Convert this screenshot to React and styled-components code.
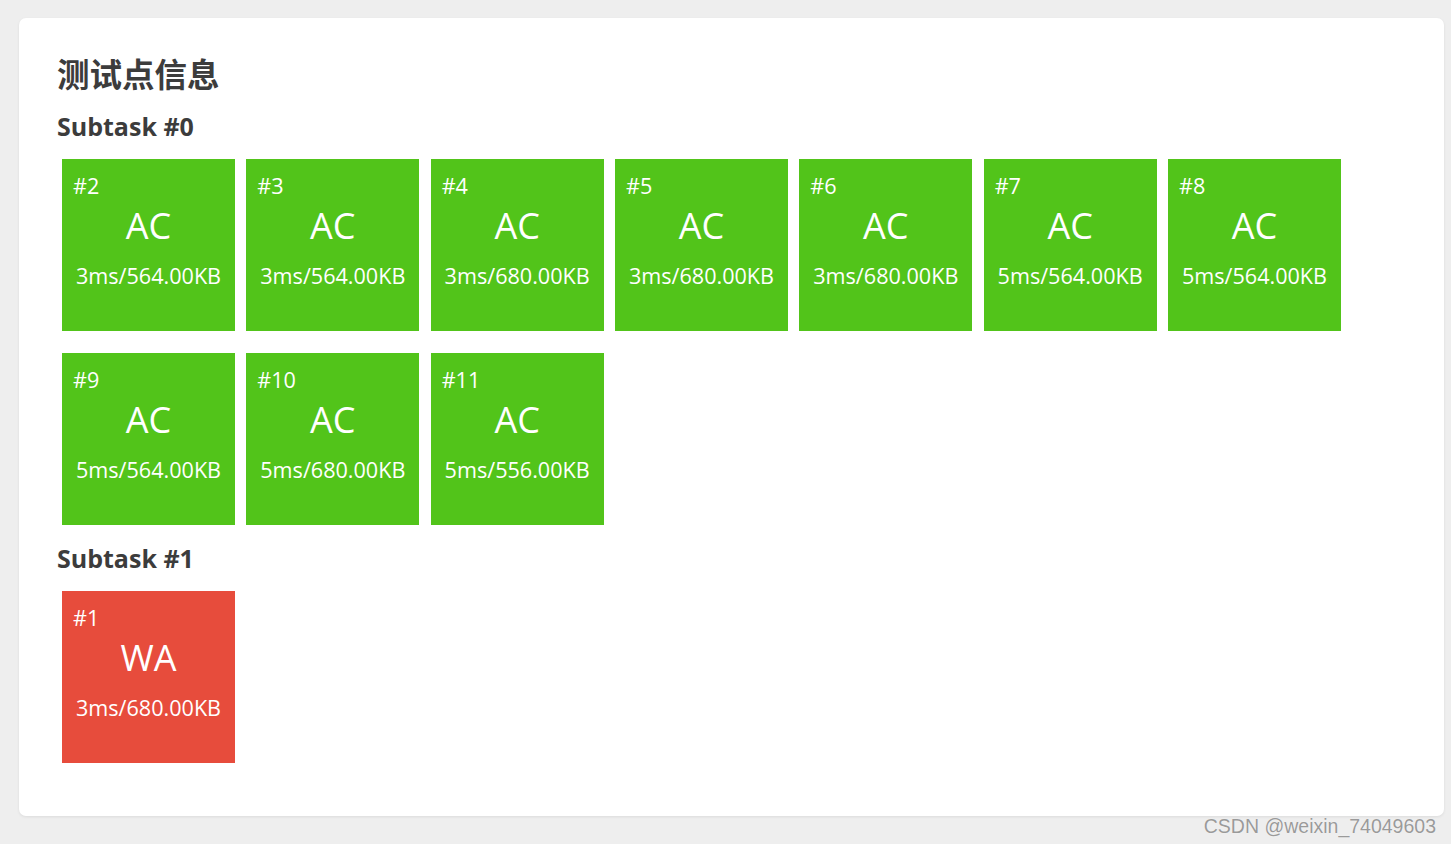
import React from "react";
import styled, { createGlobalStyle } from "styled-components";

const Global = createGlobalStyle`
  html, body { margin: 0; padding: 0; background: #eeeeee; }
  body { font-family: "Open Sans", "Noto Sans CJK SC", sans-serif; }
`;

const Page = styled.div`
  position: relative;
  width: 1451px;
  height: 844px;
  padding: 18px 7px 0 19px;
  box-sizing: border-box;
  overflow: hidden;
`;

const Card = styled.section`
  background: #ffffff;
  border-radius: 7px;
  box-shadow: 0 1px 3px rgba(0, 0, 0, 0.08);
  height: 798px;
  box-sizing: border-box;
  padding: 37px 38px 0 38px;
`;

const Title = styled.h2`
  margin: 0;
  font-family: "Open Sans", "Noto Sans CJK SC", sans-serif;
  font-size: 32.5px;
  line-height: 40px;
  font-weight: 700;
  color: #3c3c3c;
`;

const SubTitle = styled.h3`
  margin: ${(p) => (p.$first ? "15px" : "0")} 0 17px 0;
  font-size: 25px;
  line-height: 32px;
  font-weight: 700;
  color: #3c3c3c;
`;

const Grid = styled.div`
  display: flex;
  flex-wrap: wrap;
  column-gap: 11.33px;
  row-gap: 22px;
  padding-left: 5px;
  margin-bottom: 17px;
`;

const Box = styled.div`
  width: 173px;
  height: 172px;
  box-sizing: border-box;
  padding-top: 12px;
  background: ${(p) => (p.$status === "AC" ? "#52c41a" : "#e74c3c")};
  color: #ffffff;
`;

const Num = styled.div`
  padding-left: 11px;
  font-size: 21.6px;
  line-height: 30px;
`;

const Status = styled.div`
  text-align: center;
  font-size: 36px;
  line-height: 50px;
`;

const Stat = styled.div`
  margin-top: 10px;
  text-align: center;
  font-size: 21.6px;
  line-height: 30px;
  white-space: nowrap;
`;

const Watermark = styled.div`
  position: absolute;
  right: 15px;
  bottom: 7px;
  font-family: "Liberation Sans", Arial, sans-serif;
  font-size: 19.5px;
  line-height: 22px;
  color: #9a9a9a;
  text-shadow: 0 0 1px #ffffff;
`;

const subtasks = [
  {
    name: "Subtask #0",
    cases: [
      ["#2", "AC", "3ms/564.00KB"],
      ["#3", "AC", "3ms/564.00KB"],
      ["#4", "AC", "3ms/680.00KB"],
      ["#5", "AC", "3ms/680.00KB"],
      ["#6", "AC", "3ms/680.00KB"],
      ["#7", "AC", "5ms/564.00KB"],
      ["#8", "AC", "5ms/564.00KB"],
      ["#9", "AC", "5ms/564.00KB"],
      ["#10", "AC", "5ms/680.00KB"],
      ["#11", "AC", "5ms/556.00KB"],
    ],
  },
  {
    name: "Subtask #1",
    cases: [["#1", "WA", "3ms/680.00KB"]],
  },
];

export default function App() {
  return (
    <Page>
      <Global />
      <Card>
        <Title>测试点信息</Title>
        {subtasks.map((s, i) => (
          <React.Fragment key={s.name}>
            <SubTitle $first={i === 0}>{s.name}</SubTitle>
            <Grid>
              {s.cases.map(([n, st, stat]) => (
                <Box key={n} $status={st}>
                  <Num>{n}</Num>
                  <Status>{st}</Status>
                  <Stat>{stat}</Stat>
                </Box>
              ))}
            </Grid>
          </React.Fragment>
        ))}
      </Card>
      <Watermark>CSDN @weixin_74049603</Watermark>
    </Page>
  );
}
